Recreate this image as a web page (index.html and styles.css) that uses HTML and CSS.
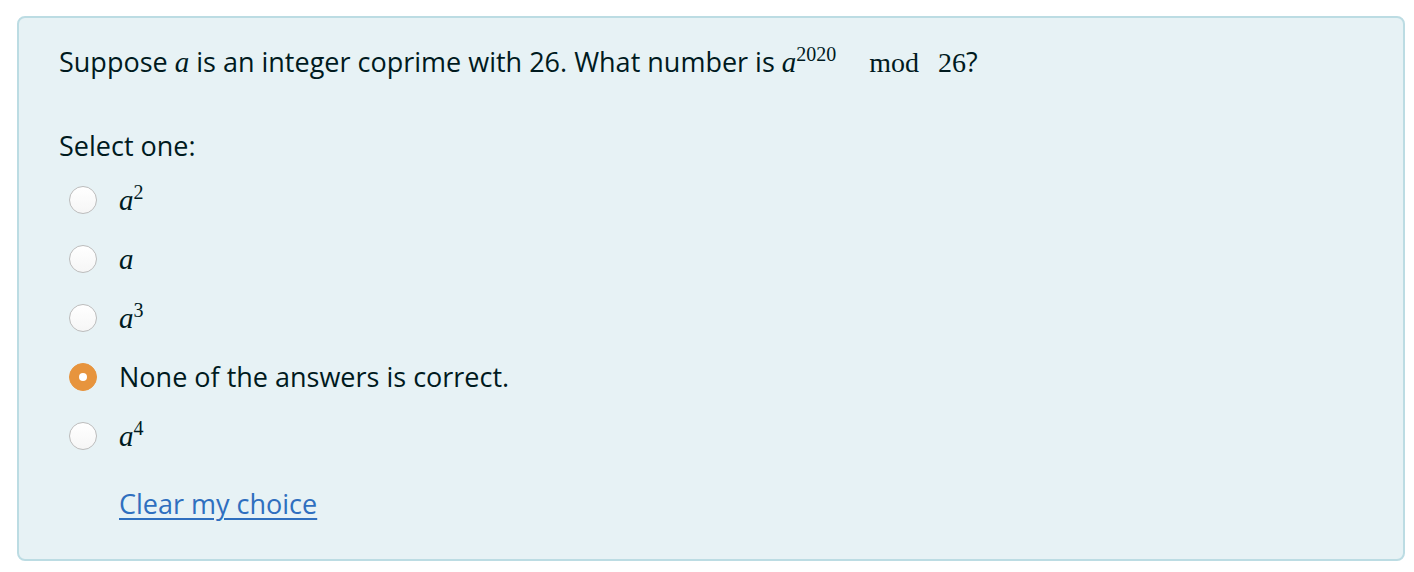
FILE: index.html
```html
<!DOCTYPE html>
<html>
<head>
<meta charset="utf-8">
<link rel="stylesheet" href="styles.css">
</head>
<body>
<div class="formulation">
  <div class="qtext">Suppose <span class="mi">a</span> is an integer coprime with 26. What number is <span class="mi">a</span><sup class="sup">2020</sup><span class="mo">mod</span><span class="mn">26</span>?</div>
  <div class="prompt">Select one:</div>
  <div class="answers">
    <div class="opt"><span class="radio"></span><span class="label"><span class="mi">a</span><sup class="sup">2</sup></span></div>
    <div class="opt"><span class="radio"></span><span class="label"><span class="mi">a</span></span></div>
    <div class="opt"><span class="radio"></span><span class="label"><span class="mi">a</span><sup class="sup">3</sup></span></div>
    <div class="opt"><span class="radio checked"></span><span class="label">None of the answers is correct.</span></div>
    <div class="opt"><span class="radio"></span><span class="label"><span class="mi">a</span><sup class="sup">4</sup></span></div>
  </div>
  <div class="clear"><a href="#">Clear my choice</a></div>
</div>
</body>
</html>
```
FILE: styles.css
```css
html, body { margin: 0; padding: 0; background: #fff; }
body { font-family: "Open Sans", "Noto Sans", sans-serif; color: #001a1e; }
.formulation {
  margin: 16px 0 0 17px;
  width: 1388px;
  height: 545px;
  box-sizing: border-box;
  background: #e7f2f5;
  border: 2px solid #bcdce3;
  border-radius: 8px;
  padding: 26px 40px 0 40px;
  font-size: 27px;
}
.qtext { line-height: 36px; height: 36px; }
.mi { font-family: "Liberation Serif", serif; font-style: italic; font-size: 29px; }
.mn, .mo { font-family: "Liberation Serif", serif; font-size: 28px; }
.mo { margin-left: 33px; margin-right: 19px; }
.sup { font-family: "Liberation Serif", serif; font-size: 20px; vertical-align: 0; position: relative; top: -11px; margin-left: 0; }
.prompt { margin-top: 48px; line-height: 36px; }
.answers { margin-top: 6px; }
.opt { display: flex; align-items: center; height: 59px; }
.radio {
  width: 28px; height: 28px; box-sizing: border-box;
  border: 1.5px solid #bcbcbc; border-radius: 50%;
  background: linear-gradient(#fff, #f6f6f6);
  margin-left: 10px; margin-right: 22px;
  flex: none;
  display: flex; align-items: center; justify-content: center;
}
.radio.checked { background: #e7943d; border-color: #e7943d; }
.radio.checked::after { content: ""; width: 8px; height: 8px; border-radius: 50%; background: #fff; }
.clear { margin-top: 21px; padding-left: 60px; line-height: 36px; }
.clear a { color: #2f6fbf; text-decoration: underline; text-underline-offset: 4px; text-decoration-thickness: 2px; }
```
